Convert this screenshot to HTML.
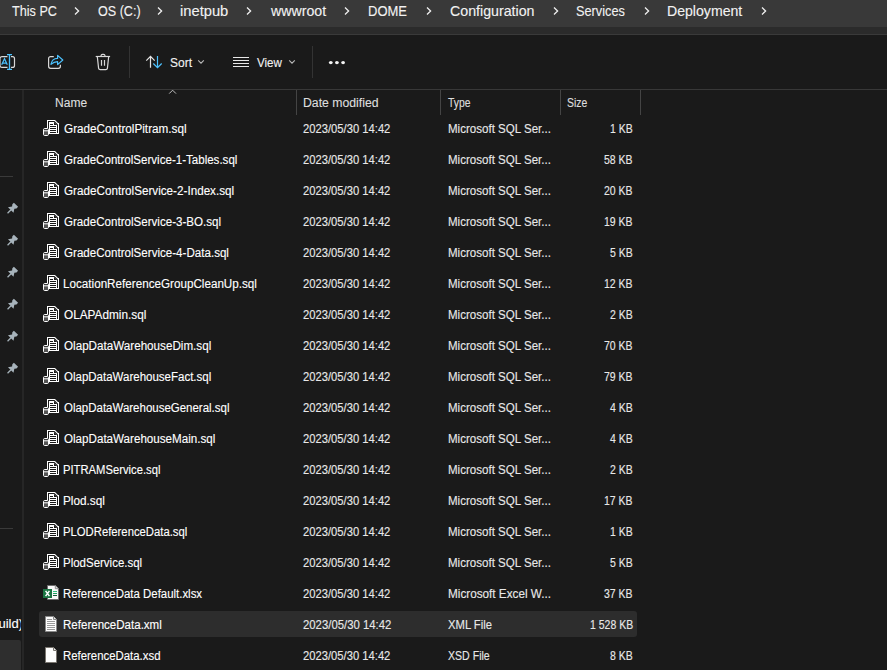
<!DOCTYPE html>
<html><head><meta charset="utf-8">
<style>
*{margin:0;padding:0;box-sizing:border-box}
html,body{width:887px;height:670px;overflow:hidden;background:#1a1a1a;font-family:"Liberation Sans",sans-serif;color:#fff}
.a,.ic,.t{position:absolute}
.t{white-space:nowrap;transform-origin:0 0;line-height:1;-webkit-text-stroke:0.12px currentColor}
.hsep{position:absolute;top:90px;width:1px;height:25px;background:#444}
</style></head><body>
<div class="a" style="left:0;top:0;width:887px;height:27px;background:#393939"></div>
<div class="a" style="left:0;top:27px;width:887px;height:7px;background:#2b2b2b"></div>
<div class="a" style="left:0;top:34px;width:887px;height:1px;background:#3a3a3a"></div>
<div class="a" style="left:0;top:89px;width:887px;height:1px;background:#383838"></div>
<div class="a" style="left:22px;top:90px;width:2px;height:580px;background:#262626"></div>

<svg class="a" width="8" height="10" viewBox="0 0 8 10" style="left:74.2px;top:6px"><path d="M1 1.5 L4.6 5 L1 8.5" fill="none" stroke="#f0f0f0" stroke-width="1.3"/></svg>
<svg class="a" width="8" height="10" viewBox="0 0 8 10" style="left:157.0px;top:6px"><path d="M1 1.5 L4.6 5 L1 8.5" fill="none" stroke="#f0f0f0" stroke-width="1.3"/></svg>
<svg class="a" width="8" height="10" viewBox="0 0 8 10" style="left:246.3px;top:6px"><path d="M1 1.5 L4.6 5 L1 8.5" fill="none" stroke="#f0f0f0" stroke-width="1.3"/></svg>
<svg class="a" width="8" height="10" viewBox="0 0 8 10" style="left:343.9px;top:6px"><path d="M1 1.5 L4.6 5 L1 8.5" fill="none" stroke="#f0f0f0" stroke-width="1.3"/></svg>
<svg class="a" width="8" height="10" viewBox="0 0 8 10" style="left:426.2px;top:6px"><path d="M1 1.5 L4.6 5 L1 8.5" fill="none" stroke="#f0f0f0" stroke-width="1.3"/></svg>
<svg class="a" width="8" height="10" viewBox="0 0 8 10" style="left:552.6px;top:6px"><path d="M1 1.5 L4.6 5 L1 8.5" fill="none" stroke="#f0f0f0" stroke-width="1.3"/></svg>
<svg class="a" width="8" height="10" viewBox="0 0 8 10" style="left:643.6px;top:6px"><path d="M1 1.5 L4.6 5 L1 8.5" fill="none" stroke="#f0f0f0" stroke-width="1.3"/></svg>
<svg class="a" width="8" height="10" viewBox="0 0 8 10" style="left:761.3px;top:6px"><path d="M1 1.5 L4.6 5 L1 8.5" fill="none" stroke="#f0f0f0" stroke-width="1.3"/></svg>
<svg class="a" width="18" height="20" viewBox="0 0 18 20" style="left:0px;top:52px">
<path d="M7.5 4.6 H2 A2 2 0 0 0 0 6.6 V13.4 A2 2 0 0 0 2 15.4 H7.5" fill="none" stroke="#d8d8d8" stroke-width="1.2"/>
<path d="M11 4.6 H12.5 A2 2 0 0 1 14.5 6.6 V13.4 A2 2 0 0 1 12.5 15.4 H11" fill="none" stroke="#d8d8d8" stroke-width="1.2"/>
<path d="M1.7 12.8 L4.5 6.7 L7.3 12.8 M2.7 11.2 H6.3" fill="none" stroke="#4cc2ff" stroke-width="1.2"/>
<path d="M9.5 2.6 V17.4 M7 2.6 H12 M7 17.4 H12" fill="none" stroke="#4cc2ff" stroke-width="1.3"/>
</svg>
<svg class="a" width="20" height="20" viewBox="0 0 20 20" style="left:45px;top:52px">
<path d="M8.8 4.6 H5.6 A2 2 0 0 0 3.6 6.6 V14.3 A2 2 0 0 0 5.6 16.3 H13.4 A2 2 0 0 0 15.4 14.3 V12.8" fill="none" stroke="#d8d8d8" stroke-width="1.2"/>
<path d="M6 12.4 C6.6 8.6 9.2 6.4 12.6 6.4 V3.4 L17.8 8 L12.6 12.6 V9.6 C9.6 9.6 7.6 10.8 6 12.4 Z" fill="none" stroke="#4cc2ff" stroke-width="1.2" stroke-linejoin="round"/>
</svg>
<svg class="a" width="20" height="20" viewBox="0 0 20 20" style="left:93px;top:52px">
<path d="M2.7 4.5 H17.1" stroke="#d8d8d8" stroke-width="1.2"/>
<path d="M8 4.5 V3.8 A1.5 1.5 0 0 1 9.5 2.4 H10.5 A1.5 1.5 0 0 1 12 3.8 V4.5" fill="none" stroke="#d8d8d8" stroke-width="1.2"/>
<path d="M4.3 4.5 L5.6 16.3 A1.6 1.6 0 0 0 7.2 17.6 H12.8 A1.6 1.6 0 0 0 14.4 16.3 L15.7 4.5" fill="none" stroke="#d8d8d8" stroke-width="1.2"/>
<path d="M8.5 8 V13.8 M11.5 8 V13.8" stroke="#d8d8d8" stroke-width="1.2"/>
</svg>
<div class="a" style="left:129px;top:46px;width:1px;height:32px;background:#333"></div>
<svg class="a" width="22" height="20" viewBox="0 0 22 20" style="left:143px;top:52px">
<path d="M7.5 15.8 V4.4 M3.3 8.6 L7.5 4.4 L11.7 8.6" fill="none" stroke="#e4e4e4" stroke-width="1.2"/>
<path d="M14.5 4 V15.6 M10.3 11.5 L14.5 15.7 L18.7 11.5" fill="none" stroke="#4cc2ff" stroke-width="1.2"/>
</svg>
<svg class="a" width="8" height="6" viewBox="0 0 8 6" style="left:197px;top:59px"><path d="M1.2 1.4 L4 4.2 L6.8 1.4" fill="none" stroke="#b8b8b8" stroke-width="1.1"/></svg>
<svg class="a" width="18" height="12" viewBox="0 0 18 12" style="left:232px;top:56px" shape-rendering="crispEdges">
<path d="M1 1h16v1h-16z M1 4h16v1h-16z M1 7h16v1h-16z M1 10h16v1h-16z" fill="#e8e8e8"/>
</svg>
<svg class="a" width="8" height="6" viewBox="0 0 8 6" style="left:288px;top:59px"><path d="M1.2 1.4 L4 4.2 L6.8 1.4" fill="none" stroke="#b8b8b8" stroke-width="1.1"/></svg>
<div class="a" style="left:312px;top:46px;width:1px;height:32px;background:#333"></div>
<svg class="a" width="20" height="6" viewBox="0 0 20 6" style="left:327px;top:60px">
<ellipse cx="3.8" cy="2.6" rx="1.9" ry="1.6" fill="#f4f4f4"/><ellipse cx="9.9" cy="2.6" rx="1.9" ry="1.6" fill="#f4f4f4"/><ellipse cx="16.1" cy="2.6" rx="1.9" ry="1.6" fill="#f4f4f4"/>
</svg>

<div class="a" style="left:0;top:176px;width:13px;height:1px;background:#3a3a3a"></div>
<div class="a" style="left:0;top:528px;width:13px;height:1px;background:#3a3a3a"></div>
<svg class="a" width="21" height="18" viewBox="0 0 21 18" style="left:0;top:200px"><g transform="translate(15.98 4.78) rotate(45)" fill="#a7b3bb"><path d="M-2.95 0 H2.95 V2.2 L1.6 3.9 L3.9 7.4 H-3.9 L-1.6 3.9 L-2.95 2.2 Z"/><path d="M-0.65 7 H0.65 V11.9 H-0.65 Z"/></g></svg>
<svg class="a" width="21" height="18" viewBox="0 0 21 18" style="left:0;top:232px"><g transform="translate(15.98 4.78) rotate(45)" fill="#a7b3bb"><path d="M-2.95 0 H2.95 V2.2 L1.6 3.9 L3.9 7.4 H-3.9 L-1.6 3.9 L-2.95 2.2 Z"/><path d="M-0.65 7 H0.65 V11.9 H-0.65 Z"/></g></svg>
<svg class="a" width="21" height="18" viewBox="0 0 21 18" style="left:0;top:264px"><g transform="translate(15.98 4.78) rotate(45)" fill="#a7b3bb"><path d="M-2.95 0 H2.95 V2.2 L1.6 3.9 L3.9 7.4 H-3.9 L-1.6 3.9 L-2.95 2.2 Z"/><path d="M-0.65 7 H0.65 V11.9 H-0.65 Z"/></g></svg>
<svg class="a" width="21" height="18" viewBox="0 0 21 18" style="left:0;top:296px"><g transform="translate(15.98 4.78) rotate(45)" fill="#a7b3bb"><path d="M-2.95 0 H2.95 V2.2 L1.6 3.9 L3.9 7.4 H-3.9 L-1.6 3.9 L-2.95 2.2 Z"/><path d="M-0.65 7 H0.65 V11.9 H-0.65 Z"/></g></svg>
<svg class="a" width="21" height="18" viewBox="0 0 21 18" style="left:0;top:328px"><g transform="translate(15.98 4.78) rotate(45)" fill="#a7b3bb"><path d="M-2.95 0 H2.95 V2.2 L1.6 3.9 L3.9 7.4 H-3.9 L-1.6 3.9 L-2.95 2.2 Z"/><path d="M-0.65 7 H0.65 V11.9 H-0.65 Z"/></g></svg>
<svg class="a" width="21" height="18" viewBox="0 0 21 18" style="left:0;top:360px"><g transform="translate(15.98 4.78) rotate(45)" fill="#a7b3bb"><path d="M-2.95 0 H2.95 V2.2 L1.6 3.9 L3.9 7.4 H-3.9 L-1.6 3.9 L-2.95 2.2 Z"/><path d="M-0.65 7 H0.65 V11.9 H-0.65 Z"/></g></svg>
<div class="a" style="left:0;top:0;width:21px;height:670px;overflow:hidden"><div class="a" style="right:-2px;top:617px;font-size:13px;line-height:13px;color:#fff;white-space:nowrap;-webkit-text-stroke:0.12px #fff">(build)</div><div class="a" style="left:-10px;top:640px;width:31px;height:40px;background:#2e2e2e;border-radius:2px"></div></div>
<svg class="a" width="10" height="6" viewBox="0 0 10 6" style="left:168px;top:89px"><path d="M1.2 4.6 L4.6 1.2 L8 4.6" fill="none" stroke="#c0c0c0" stroke-width="1"/></svg>
<div class="hsep" style="left:296px"></div>
<div class="hsep" style="left:440px"></div>
<div class="hsep" style="left:560px"></div>
<div class="hsep" style="left:640px"></div>
<svg class="ic" width="18" height="18" viewBox="0 0 18 18" style="left:42px;top:119px" shape-rendering="crispEdges">
<path d="M5 1H13V2H5Z M5 1H6V9H5Z M16 4H17V15H16Z M7 14H17V15H7Z" fill="#fff"/>
<path d="M12.6 1.4 L16.6 5.4" stroke="#fff" stroke-width="1.1" shape-rendering="auto"/>
<path d="M7 3H12V6H15V14H7Z" fill="#fff"/>
<path d="M12 3 L15 6" stroke="#444" stroke-width="1" shape-rendering="auto"/>
<path d="M8 5H11V6H8Z M8 7H14V8H8Z M8 9H14V10H8Z M8 11H14V12H8Z M8 13H14V14H8Z" fill="#1a1a1a"/>
<rect x="1.5" y="9.5" width="5" height="7" rx="1.3" fill="#1a1a1a" stroke="#fff" stroke-width="1" shape-rendering="auto"/>
<path d="M2 10H6V11H2Z" fill="#3a3a3a"/>
<path d="M2 11H6V12H2Z" fill="#c8c8c8"/>
<path d="M2 12H6V13H2Z" fill="#8a8a8a"/>
<path d="M2 13H6V16H2Z" fill="#555"/>
</svg>
<svg class="ic" width="18" height="18" viewBox="0 0 18 18" style="left:42px;top:150px" shape-rendering="crispEdges">
<path d="M5 1H13V2H5Z M5 1H6V9H5Z M16 4H17V15H16Z M7 14H17V15H7Z" fill="#fff"/>
<path d="M12.6 1.4 L16.6 5.4" stroke="#fff" stroke-width="1.1" shape-rendering="auto"/>
<path d="M7 3H12V6H15V14H7Z" fill="#fff"/>
<path d="M12 3 L15 6" stroke="#444" stroke-width="1" shape-rendering="auto"/>
<path d="M8 5H11V6H8Z M8 7H14V8H8Z M8 9H14V10H8Z M8 11H14V12H8Z M8 13H14V14H8Z" fill="#1a1a1a"/>
<rect x="1.5" y="9.5" width="5" height="7" rx="1.3" fill="#1a1a1a" stroke="#fff" stroke-width="1" shape-rendering="auto"/>
<path d="M2 10H6V11H2Z" fill="#3a3a3a"/>
<path d="M2 11H6V12H2Z" fill="#c8c8c8"/>
<path d="M2 12H6V13H2Z" fill="#8a8a8a"/>
<path d="M2 13H6V16H2Z" fill="#555"/>
</svg>
<svg class="ic" width="18" height="18" viewBox="0 0 18 18" style="left:42px;top:181px" shape-rendering="crispEdges">
<path d="M5 1H13V2H5Z M5 1H6V9H5Z M16 4H17V15H16Z M7 14H17V15H7Z" fill="#fff"/>
<path d="M12.6 1.4 L16.6 5.4" stroke="#fff" stroke-width="1.1" shape-rendering="auto"/>
<path d="M7 3H12V6H15V14H7Z" fill="#fff"/>
<path d="M12 3 L15 6" stroke="#444" stroke-width="1" shape-rendering="auto"/>
<path d="M8 5H11V6H8Z M8 7H14V8H8Z M8 9H14V10H8Z M8 11H14V12H8Z M8 13H14V14H8Z" fill="#1a1a1a"/>
<rect x="1.5" y="9.5" width="5" height="7" rx="1.3" fill="#1a1a1a" stroke="#fff" stroke-width="1" shape-rendering="auto"/>
<path d="M2 10H6V11H2Z" fill="#3a3a3a"/>
<path d="M2 11H6V12H2Z" fill="#c8c8c8"/>
<path d="M2 12H6V13H2Z" fill="#8a8a8a"/>
<path d="M2 13H6V16H2Z" fill="#555"/>
</svg>
<svg class="ic" width="18" height="18" viewBox="0 0 18 18" style="left:42px;top:212px" shape-rendering="crispEdges">
<path d="M5 1H13V2H5Z M5 1H6V9H5Z M16 4H17V15H16Z M7 14H17V15H7Z" fill="#fff"/>
<path d="M12.6 1.4 L16.6 5.4" stroke="#fff" stroke-width="1.1" shape-rendering="auto"/>
<path d="M7 3H12V6H15V14H7Z" fill="#fff"/>
<path d="M12 3 L15 6" stroke="#444" stroke-width="1" shape-rendering="auto"/>
<path d="M8 5H11V6H8Z M8 7H14V8H8Z M8 9H14V10H8Z M8 11H14V12H8Z M8 13H14V14H8Z" fill="#1a1a1a"/>
<rect x="1.5" y="9.5" width="5" height="7" rx="1.3" fill="#1a1a1a" stroke="#fff" stroke-width="1" shape-rendering="auto"/>
<path d="M2 10H6V11H2Z" fill="#3a3a3a"/>
<path d="M2 11H6V12H2Z" fill="#c8c8c8"/>
<path d="M2 12H6V13H2Z" fill="#8a8a8a"/>
<path d="M2 13H6V16H2Z" fill="#555"/>
</svg>
<svg class="ic" width="18" height="18" viewBox="0 0 18 18" style="left:42px;top:243px" shape-rendering="crispEdges">
<path d="M5 1H13V2H5Z M5 1H6V9H5Z M16 4H17V15H16Z M7 14H17V15H7Z" fill="#fff"/>
<path d="M12.6 1.4 L16.6 5.4" stroke="#fff" stroke-width="1.1" shape-rendering="auto"/>
<path d="M7 3H12V6H15V14H7Z" fill="#fff"/>
<path d="M12 3 L15 6" stroke="#444" stroke-width="1" shape-rendering="auto"/>
<path d="M8 5H11V6H8Z M8 7H14V8H8Z M8 9H14V10H8Z M8 11H14V12H8Z M8 13H14V14H8Z" fill="#1a1a1a"/>
<rect x="1.5" y="9.5" width="5" height="7" rx="1.3" fill="#1a1a1a" stroke="#fff" stroke-width="1" shape-rendering="auto"/>
<path d="M2 10H6V11H2Z" fill="#3a3a3a"/>
<path d="M2 11H6V12H2Z" fill="#c8c8c8"/>
<path d="M2 12H6V13H2Z" fill="#8a8a8a"/>
<path d="M2 13H6V16H2Z" fill="#555"/>
</svg>
<svg class="ic" width="18" height="18" viewBox="0 0 18 18" style="left:42px;top:274px" shape-rendering="crispEdges">
<path d="M5 1H13V2H5Z M5 1H6V9H5Z M16 4H17V15H16Z M7 14H17V15H7Z" fill="#fff"/>
<path d="M12.6 1.4 L16.6 5.4" stroke="#fff" stroke-width="1.1" shape-rendering="auto"/>
<path d="M7 3H12V6H15V14H7Z" fill="#fff"/>
<path d="M12 3 L15 6" stroke="#444" stroke-width="1" shape-rendering="auto"/>
<path d="M8 5H11V6H8Z M8 7H14V8H8Z M8 9H14V10H8Z M8 11H14V12H8Z M8 13H14V14H8Z" fill="#1a1a1a"/>
<rect x="1.5" y="9.5" width="5" height="7" rx="1.3" fill="#1a1a1a" stroke="#fff" stroke-width="1" shape-rendering="auto"/>
<path d="M2 10H6V11H2Z" fill="#3a3a3a"/>
<path d="M2 11H6V12H2Z" fill="#c8c8c8"/>
<path d="M2 12H6V13H2Z" fill="#8a8a8a"/>
<path d="M2 13H6V16H2Z" fill="#555"/>
</svg>
<svg class="ic" width="18" height="18" viewBox="0 0 18 18" style="left:42px;top:305px" shape-rendering="crispEdges">
<path d="M5 1H13V2H5Z M5 1H6V9H5Z M16 4H17V15H16Z M7 14H17V15H7Z" fill="#fff"/>
<path d="M12.6 1.4 L16.6 5.4" stroke="#fff" stroke-width="1.1" shape-rendering="auto"/>
<path d="M7 3H12V6H15V14H7Z" fill="#fff"/>
<path d="M12 3 L15 6" stroke="#444" stroke-width="1" shape-rendering="auto"/>
<path d="M8 5H11V6H8Z M8 7H14V8H8Z M8 9H14V10H8Z M8 11H14V12H8Z M8 13H14V14H8Z" fill="#1a1a1a"/>
<rect x="1.5" y="9.5" width="5" height="7" rx="1.3" fill="#1a1a1a" stroke="#fff" stroke-width="1" shape-rendering="auto"/>
<path d="M2 10H6V11H2Z" fill="#3a3a3a"/>
<path d="M2 11H6V12H2Z" fill="#c8c8c8"/>
<path d="M2 12H6V13H2Z" fill="#8a8a8a"/>
<path d="M2 13H6V16H2Z" fill="#555"/>
</svg>
<svg class="ic" width="18" height="18" viewBox="0 0 18 18" style="left:42px;top:336px" shape-rendering="crispEdges">
<path d="M5 1H13V2H5Z M5 1H6V9H5Z M16 4H17V15H16Z M7 14H17V15H7Z" fill="#fff"/>
<path d="M12.6 1.4 L16.6 5.4" stroke="#fff" stroke-width="1.1" shape-rendering="auto"/>
<path d="M7 3H12V6H15V14H7Z" fill="#fff"/>
<path d="M12 3 L15 6" stroke="#444" stroke-width="1" shape-rendering="auto"/>
<path d="M8 5H11V6H8Z M8 7H14V8H8Z M8 9H14V10H8Z M8 11H14V12H8Z M8 13H14V14H8Z" fill="#1a1a1a"/>
<rect x="1.5" y="9.5" width="5" height="7" rx="1.3" fill="#1a1a1a" stroke="#fff" stroke-width="1" shape-rendering="auto"/>
<path d="M2 10H6V11H2Z" fill="#3a3a3a"/>
<path d="M2 11H6V12H2Z" fill="#c8c8c8"/>
<path d="M2 12H6V13H2Z" fill="#8a8a8a"/>
<path d="M2 13H6V16H2Z" fill="#555"/>
</svg>
<svg class="ic" width="18" height="18" viewBox="0 0 18 18" style="left:42px;top:367px" shape-rendering="crispEdges">
<path d="M5 1H13V2H5Z M5 1H6V9H5Z M16 4H17V15H16Z M7 14H17V15H7Z" fill="#fff"/>
<path d="M12.6 1.4 L16.6 5.4" stroke="#fff" stroke-width="1.1" shape-rendering="auto"/>
<path d="M7 3H12V6H15V14H7Z" fill="#fff"/>
<path d="M12 3 L15 6" stroke="#444" stroke-width="1" shape-rendering="auto"/>
<path d="M8 5H11V6H8Z M8 7H14V8H8Z M8 9H14V10H8Z M8 11H14V12H8Z M8 13H14V14H8Z" fill="#1a1a1a"/>
<rect x="1.5" y="9.5" width="5" height="7" rx="1.3" fill="#1a1a1a" stroke="#fff" stroke-width="1" shape-rendering="auto"/>
<path d="M2 10H6V11H2Z" fill="#3a3a3a"/>
<path d="M2 11H6V12H2Z" fill="#c8c8c8"/>
<path d="M2 12H6V13H2Z" fill="#8a8a8a"/>
<path d="M2 13H6V16H2Z" fill="#555"/>
</svg>
<svg class="ic" width="18" height="18" viewBox="0 0 18 18" style="left:42px;top:398px" shape-rendering="crispEdges">
<path d="M5 1H13V2H5Z M5 1H6V9H5Z M16 4H17V15H16Z M7 14H17V15H7Z" fill="#fff"/>
<path d="M12.6 1.4 L16.6 5.4" stroke="#fff" stroke-width="1.1" shape-rendering="auto"/>
<path d="M7 3H12V6H15V14H7Z" fill="#fff"/>
<path d="M12 3 L15 6" stroke="#444" stroke-width="1" shape-rendering="auto"/>
<path d="M8 5H11V6H8Z M8 7H14V8H8Z M8 9H14V10H8Z M8 11H14V12H8Z M8 13H14V14H8Z" fill="#1a1a1a"/>
<rect x="1.5" y="9.5" width="5" height="7" rx="1.3" fill="#1a1a1a" stroke="#fff" stroke-width="1" shape-rendering="auto"/>
<path d="M2 10H6V11H2Z" fill="#3a3a3a"/>
<path d="M2 11H6V12H2Z" fill="#c8c8c8"/>
<path d="M2 12H6V13H2Z" fill="#8a8a8a"/>
<path d="M2 13H6V16H2Z" fill="#555"/>
</svg>
<svg class="ic" width="18" height="18" viewBox="0 0 18 18" style="left:42px;top:429px" shape-rendering="crispEdges">
<path d="M5 1H13V2H5Z M5 1H6V9H5Z M16 4H17V15H16Z M7 14H17V15H7Z" fill="#fff"/>
<path d="M12.6 1.4 L16.6 5.4" stroke="#fff" stroke-width="1.1" shape-rendering="auto"/>
<path d="M7 3H12V6H15V14H7Z" fill="#fff"/>
<path d="M12 3 L15 6" stroke="#444" stroke-width="1" shape-rendering="auto"/>
<path d="M8 5H11V6H8Z M8 7H14V8H8Z M8 9H14V10H8Z M8 11H14V12H8Z M8 13H14V14H8Z" fill="#1a1a1a"/>
<rect x="1.5" y="9.5" width="5" height="7" rx="1.3" fill="#1a1a1a" stroke="#fff" stroke-width="1" shape-rendering="auto"/>
<path d="M2 10H6V11H2Z" fill="#3a3a3a"/>
<path d="M2 11H6V12H2Z" fill="#c8c8c8"/>
<path d="M2 12H6V13H2Z" fill="#8a8a8a"/>
<path d="M2 13H6V16H2Z" fill="#555"/>
</svg>
<svg class="ic" width="18" height="18" viewBox="0 0 18 18" style="left:42px;top:460px" shape-rendering="crispEdges">
<path d="M5 1H13V2H5Z M5 1H6V9H5Z M16 4H17V15H16Z M7 14H17V15H7Z" fill="#fff"/>
<path d="M12.6 1.4 L16.6 5.4" stroke="#fff" stroke-width="1.1" shape-rendering="auto"/>
<path d="M7 3H12V6H15V14H7Z" fill="#fff"/>
<path d="M12 3 L15 6" stroke="#444" stroke-width="1" shape-rendering="auto"/>
<path d="M8 5H11V6H8Z M8 7H14V8H8Z M8 9H14V10H8Z M8 11H14V12H8Z M8 13H14V14H8Z" fill="#1a1a1a"/>
<rect x="1.5" y="9.5" width="5" height="7" rx="1.3" fill="#1a1a1a" stroke="#fff" stroke-width="1" shape-rendering="auto"/>
<path d="M2 10H6V11H2Z" fill="#3a3a3a"/>
<path d="M2 11H6V12H2Z" fill="#c8c8c8"/>
<path d="M2 12H6V13H2Z" fill="#8a8a8a"/>
<path d="M2 13H6V16H2Z" fill="#555"/>
</svg>
<svg class="ic" width="18" height="18" viewBox="0 0 18 18" style="left:42px;top:491px" shape-rendering="crispEdges">
<path d="M5 1H13V2H5Z M5 1H6V9H5Z M16 4H17V15H16Z M7 14H17V15H7Z" fill="#fff"/>
<path d="M12.6 1.4 L16.6 5.4" stroke="#fff" stroke-width="1.1" shape-rendering="auto"/>
<path d="M7 3H12V6H15V14H7Z" fill="#fff"/>
<path d="M12 3 L15 6" stroke="#444" stroke-width="1" shape-rendering="auto"/>
<path d="M8 5H11V6H8Z M8 7H14V8H8Z M8 9H14V10H8Z M8 11H14V12H8Z M8 13H14V14H8Z" fill="#1a1a1a"/>
<rect x="1.5" y="9.5" width="5" height="7" rx="1.3" fill="#1a1a1a" stroke="#fff" stroke-width="1" shape-rendering="auto"/>
<path d="M2 10H6V11H2Z" fill="#3a3a3a"/>
<path d="M2 11H6V12H2Z" fill="#c8c8c8"/>
<path d="M2 12H6V13H2Z" fill="#8a8a8a"/>
<path d="M2 13H6V16H2Z" fill="#555"/>
</svg>
<svg class="ic" width="18" height="18" viewBox="0 0 18 18" style="left:42px;top:522px" shape-rendering="crispEdges">
<path d="M5 1H13V2H5Z M5 1H6V9H5Z M16 4H17V15H16Z M7 14H17V15H7Z" fill="#fff"/>
<path d="M12.6 1.4 L16.6 5.4" stroke="#fff" stroke-width="1.1" shape-rendering="auto"/>
<path d="M7 3H12V6H15V14H7Z" fill="#fff"/>
<path d="M12 3 L15 6" stroke="#444" stroke-width="1" shape-rendering="auto"/>
<path d="M8 5H11V6H8Z M8 7H14V8H8Z M8 9H14V10H8Z M8 11H14V12H8Z M8 13H14V14H8Z" fill="#1a1a1a"/>
<rect x="1.5" y="9.5" width="5" height="7" rx="1.3" fill="#1a1a1a" stroke="#fff" stroke-width="1" shape-rendering="auto"/>
<path d="M2 10H6V11H2Z" fill="#3a3a3a"/>
<path d="M2 11H6V12H2Z" fill="#c8c8c8"/>
<path d="M2 12H6V13H2Z" fill="#8a8a8a"/>
<path d="M2 13H6V16H2Z" fill="#555"/>
</svg>
<svg class="ic" width="18" height="18" viewBox="0 0 18 18" style="left:42px;top:553px" shape-rendering="crispEdges">
<path d="M5 1H13V2H5Z M5 1H6V9H5Z M16 4H17V15H16Z M7 14H17V15H7Z" fill="#fff"/>
<path d="M12.6 1.4 L16.6 5.4" stroke="#fff" stroke-width="1.1" shape-rendering="auto"/>
<path d="M7 3H12V6H15V14H7Z" fill="#fff"/>
<path d="M12 3 L15 6" stroke="#444" stroke-width="1" shape-rendering="auto"/>
<path d="M8 5H11V6H8Z M8 7H14V8H8Z M8 9H14V10H8Z M8 11H14V12H8Z M8 13H14V14H8Z" fill="#1a1a1a"/>
<rect x="1.5" y="9.5" width="5" height="7" rx="1.3" fill="#1a1a1a" stroke="#fff" stroke-width="1" shape-rendering="auto"/>
<path d="M2 10H6V11H2Z" fill="#3a3a3a"/>
<path d="M2 11H6V12H2Z" fill="#c8c8c8"/>
<path d="M2 12H6V13H2Z" fill="#8a8a8a"/>
<path d="M2 13H6V16H2Z" fill="#555"/>
</svg>
<svg class="ic" width="18" height="18" viewBox="0 0 18 18" style="left:42px;top:584px" shape-rendering="crispEdges">
<path d="M5.5 1.5 H13.3 L16.5 4.7 V15.5 H5.5 Z" fill="#fafafa" stroke="#6e6e6e" stroke-width="1" shape-rendering="auto"/>
<path d="M13.3 1.5 V4.7 H16.5" fill="#ddd" stroke="#888" stroke-width="0.9" shape-rendering="auto"/>
<path d="M11 7H15V8H11Z" fill="#33c481"/>
<path d="M11 9H15V10H11Z" fill="#21a366"/>
<path d="M11 11H15V12H11Z" fill="#185c37"/>
<rect x="1" y="5" width="9" height="9" fill="#1d7544"/>
<path d="M3.6 6.9 L7.4 12.1 M7.4 6.9 L3.6 12.1" stroke="#fff" stroke-width="1.5" shape-rendering="auto"/>
</svg>
<div class="a" style="left:39px;top:611px;width:598px;height:26px;background:#2d2d2d;border-radius:3px"></div>
<svg class="ic" width="18" height="18" viewBox="0 0 18 18" style="left:42px;top:615px" shape-rendering="crispEdges">
<path d="M3.5 1.5 H11.5 L14.5 4.5 V16.5 H3.5 Z" fill="#fdfdfd" stroke="#8a8a8a" stroke-width="1" shape-rendering="auto"/>
<path d="M11.5 1.5 V4.5 H14.5" fill="#e8e8e8" stroke="#8a8a8a" stroke-width="1" shape-rendering="auto"/>
<path d="M5 4H10V5H5Z M5 6H13V7H5Z M5 8H13V9H5Z M5 10H13V11H5Z M5 12H13V13H5Z M5 14H13V15H5Z" fill="#9a9a9a"/>
</svg>
<svg class="ic" width="18" height="18" viewBox="0 0 18 18" style="left:42px;top:646px">
<path d="M3.5 1.5 H11.5 L14.5 4.5 V16.5 H3.5 Z" fill="#fdfdfd" stroke="#7a7670" stroke-width="1"/>
<path d="M11.5 1.5 V4.5 H14.5" fill="#e8e8e8" stroke="#7a7670" stroke-width="1"/>
</svg>
<div class="t" id="c0" style="top:2.5px;font-size:15px;color:#f2f2f2;left:12.00px;transform:scaleX(0.8434);">This PC</div>
<div class="t" id="c1" style="top:2.5px;font-size:15px;color:#f2f2f2;left:97.81px;transform:scaleX(0.8380);">OS (C:)</div>
<div class="t" id="c2" style="top:2.5px;font-size:15px;color:#f2f2f2;left:180.40px;transform:scaleX(0.9813);">inetpub</div>
<div class="t" id="c3" style="top:2.5px;font-size:15px;color:#f2f2f2;left:270.58px;transform:scaleX(0.9441);">wwwroot</div>
<div class="t" id="c4" style="top:2.5px;font-size:15px;color:#f2f2f2;left:368.07px;transform:scaleX(0.8667);">DOME</div>
<div class="t" id="c5" style="top:2.5px;font-size:15px;color:#f2f2f2;left:450.00px;transform:scaleX(0.9472);">Configuration</div>
<div class="t" id="c6" style="top:2.5px;font-size:15px;color:#f2f2f2;left:576.08px;transform:scaleX(0.8491);">Services</div>
<div class="t" id="c7" style="top:2.5px;font-size:15px;color:#f2f2f2;left:666.64px;transform:scaleX(0.9400);">Deployment</div>
<div class="t" id="sort" style="top:56px;font-size:13px;color:#f2f2f2;left:169.61px;transform:scaleX(0.9208);">Sort</div>
<div class="t" id="view" style="top:56px;font-size:13px;color:#f2f2f2;left:256.95px;transform:scaleX(0.8931);">View</div>
<div class="t" id="h0" style="top:97px;font-size:12px;color:#dedede;left:54.59px;transform:scaleX(1.0031);">Name</div>
<div class="t" id="h1" style="top:97px;font-size:12px;color:#dedede;left:302.58px;transform:scaleX(1.0205);">Date modified</div>
<div class="t" id="h2" style="top:97px;font-size:12px;color:#dedede;left:448.11px;transform:scaleX(0.8667);">Type</div>
<div class="t" id="h3" style="top:97px;font-size:12px;color:#dedede;left:566.80px;transform:scaleX(0.8696);">Size</div>
<div class="t" id="n0" style="top:123px;font-size:12px;color:#ffffff;left:63.78px;transform:scaleX(0.9778);">GradeControlPitram.sql</div>
<div class="t" id="d0" style="top:123px;font-size:12px;color:#e8e8e8;left:303.19px;transform:scaleX(0.9351);">2023/05/30 14:42</div>
<div class="t" id="t0" style="top:123px;font-size:12px;color:#e8e8e8;left:447.60px;transform:scaleX(0.9623);">Microsoft SQL Ser...</div>
<div class="t" id="s0" style="top:123px;font-size:12px;color:#e8e8e8;left:609.91px;transform:scaleX(0.8735);">1 KB</div>
<div class="t" id="n1" style="top:154px;font-size:12px;color:#ffffff;left:63.78px;transform:scaleX(0.9628);">GradeControlService-1-Tables.sql</div>
<div class="t" id="d1" style="top:154px;font-size:12px;color:#e8e8e8;left:303.19px;transform:scaleX(0.9351);">2023/05/30 14:42</div>
<div class="t" id="t1" style="top:154px;font-size:12px;color:#e8e8e8;left:447.60px;transform:scaleX(0.9623);">Microsoft SQL Ser...</div>
<div class="t" id="s1" style="top:154px;font-size:12px;color:#e8e8e8;left:604.07px;transform:scaleX(0.8735);">58 KB</div>
<div class="t" id="n2" style="top:185px;font-size:12px;color:#ffffff;left:63.78px;transform:scaleX(0.9737);">GradeControlService-2-Index.sql</div>
<div class="t" id="d2" style="top:185px;font-size:12px;color:#e8e8e8;left:303.19px;transform:scaleX(0.9351);">2023/05/30 14:42</div>
<div class="t" id="t2" style="top:185px;font-size:12px;color:#e8e8e8;left:447.60px;transform:scaleX(0.9623);">Microsoft SQL Ser...</div>
<div class="t" id="s2" style="top:185px;font-size:12px;color:#e8e8e8;left:604.07px;transform:scaleX(0.8735);">20 KB</div>
<div class="t" id="n3" style="top:216px;font-size:12px;color:#ffffff;left:63.78px;transform:scaleX(0.9650);">GradeControlService-3-BO.sql</div>
<div class="t" id="d3" style="top:216px;font-size:12px;color:#e8e8e8;left:303.19px;transform:scaleX(0.9351);">2023/05/30 14:42</div>
<div class="t" id="t3" style="top:216px;font-size:12px;color:#e8e8e8;left:447.60px;transform:scaleX(0.9623);">Microsoft SQL Ser...</div>
<div class="t" id="s3" style="top:216px;font-size:12px;color:#e8e8e8;left:604.07px;transform:scaleX(0.8735);">19 KB</div>
<div class="t" id="n4" style="top:247px;font-size:12px;color:#ffffff;left:63.78px;transform:scaleX(0.9661);">GradeControlService-4-Data.sql</div>
<div class="t" id="d4" style="top:247px;font-size:12px;color:#e8e8e8;left:303.19px;transform:scaleX(0.9351);">2023/05/30 14:42</div>
<div class="t" id="t4" style="top:247px;font-size:12px;color:#e8e8e8;left:447.60px;transform:scaleX(0.9623);">Microsoft SQL Ser...</div>
<div class="t" id="s4" style="top:247px;font-size:12px;color:#e8e8e8;left:609.91px;transform:scaleX(0.8735);">5 KB</div>
<div class="t" id="n5" style="top:278px;font-size:12px;color:#ffffff;left:62.81px;transform:scaleX(0.9724);">LocationReferenceGroupCleanUp.sql</div>
<div class="t" id="d5" style="top:278px;font-size:12px;color:#e8e8e8;left:303.19px;transform:scaleX(0.9351);">2023/05/30 14:42</div>
<div class="t" id="t5" style="top:278px;font-size:12px;color:#e8e8e8;left:447.60px;transform:scaleX(0.9623);">Microsoft SQL Ser...</div>
<div class="t" id="s5" style="top:278px;font-size:12px;color:#e8e8e8;left:604.07px;transform:scaleX(0.8735);">12 KB</div>
<div class="t" id="n6" style="top:309px;font-size:12px;color:#ffffff;left:63.78px;transform:scaleX(0.9833);">OLAPAdmin.sql</div>
<div class="t" id="d6" style="top:309px;font-size:12px;color:#e8e8e8;left:303.19px;transform:scaleX(0.9351);">2023/05/30 14:42</div>
<div class="t" id="t6" style="top:309px;font-size:12px;color:#e8e8e8;left:447.60px;transform:scaleX(0.9623);">Microsoft SQL Ser...</div>
<div class="t" id="s6" style="top:309px;font-size:12px;color:#e8e8e8;left:609.91px;transform:scaleX(0.8735);">2 KB</div>
<div class="t" id="n7" style="top:340px;font-size:12px;color:#ffffff;left:63.78px;transform:scaleX(0.9711);">OlapDataWarehouseDim.sql</div>
<div class="t" id="d7" style="top:340px;font-size:12px;color:#e8e8e8;left:303.19px;transform:scaleX(0.9351);">2023/05/30 14:42</div>
<div class="t" id="t7" style="top:340px;font-size:12px;color:#e8e8e8;left:447.60px;transform:scaleX(0.9623);">Microsoft SQL Ser...</div>
<div class="t" id="s7" style="top:340px;font-size:12px;color:#e8e8e8;left:604.07px;transform:scaleX(0.8735);">70 KB</div>
<div class="t" id="n8" style="top:371px;font-size:12px;color:#ffffff;left:63.77px;transform:scaleX(0.9584);">OlapDataWarehouseFact.sql</div>
<div class="t" id="d8" style="top:371px;font-size:12px;color:#e8e8e8;left:303.19px;transform:scaleX(0.9351);">2023/05/30 14:42</div>
<div class="t" id="t8" style="top:371px;font-size:12px;color:#e8e8e8;left:447.60px;transform:scaleX(0.9623);">Microsoft SQL Ser...</div>
<div class="t" id="s8" style="top:371px;font-size:12px;color:#e8e8e8;left:604.07px;transform:scaleX(0.8735);">79 KB</div>
<div class="t" id="n9" style="top:402px;font-size:12px;color:#ffffff;left:63.77px;transform:scaleX(0.9566);">OlapDataWarehouseGeneral.sql</div>
<div class="t" id="d9" style="top:402px;font-size:12px;color:#e8e8e8;left:303.19px;transform:scaleX(0.9351);">2023/05/30 14:42</div>
<div class="t" id="t9" style="top:402px;font-size:12px;color:#e8e8e8;left:447.60px;transform:scaleX(0.9623);">Microsoft SQL Ser...</div>
<div class="t" id="s9" style="top:402px;font-size:12px;color:#e8e8e8;left:609.91px;transform:scaleX(0.8735);">4 KB</div>
<div class="t" id="n10" style="top:433px;font-size:12px;color:#ffffff;left:63.78px;transform:scaleX(0.9682);">OlapDataWarehouseMain.sql</div>
<div class="t" id="d10" style="top:433px;font-size:12px;color:#e8e8e8;left:303.19px;transform:scaleX(0.9351);">2023/05/30 14:42</div>
<div class="t" id="t10" style="top:433px;font-size:12px;color:#e8e8e8;left:447.60px;transform:scaleX(0.9623);">Microsoft SQL Ser...</div>
<div class="t" id="s10" style="top:433px;font-size:12px;color:#e8e8e8;left:609.91px;transform:scaleX(0.8735);">4 KB</div>
<div class="t" id="n11" style="top:464px;font-size:12px;color:#ffffff;left:62.83px;transform:scaleX(0.9369);">PITRAMService.sql</div>
<div class="t" id="d11" style="top:464px;font-size:12px;color:#e8e8e8;left:303.19px;transform:scaleX(0.9351);">2023/05/30 14:42</div>
<div class="t" id="t11" style="top:464px;font-size:12px;color:#e8e8e8;left:447.60px;transform:scaleX(0.9623);">Microsoft SQL Ser...</div>
<div class="t" id="s11" style="top:464px;font-size:12px;color:#e8e8e8;left:609.91px;transform:scaleX(0.8735);">2 KB</div>
<div class="t" id="n12" style="top:495px;font-size:12px;color:#ffffff;left:62.80px;transform:scaleX(0.9810);">Plod.sql</div>
<div class="t" id="d12" style="top:495px;font-size:12px;color:#e8e8e8;left:303.19px;transform:scaleX(0.9351);">2023/05/30 14:42</div>
<div class="t" id="t12" style="top:495px;font-size:12px;color:#e8e8e8;left:447.60px;transform:scaleX(0.9623);">Microsoft SQL Ser...</div>
<div class="t" id="s12" style="top:495px;font-size:12px;color:#e8e8e8;left:604.07px;transform:scaleX(0.8735);">17 KB</div>
<div class="t" id="n13" style="top:526px;font-size:12px;color:#ffffff;left:62.83px;transform:scaleX(0.9412);">PLODReferenceData.sql</div>
<div class="t" id="d13" style="top:526px;font-size:12px;color:#e8e8e8;left:303.19px;transform:scaleX(0.9351);">2023/05/30 14:42</div>
<div class="t" id="t13" style="top:526px;font-size:12px;color:#e8e8e8;left:447.60px;transform:scaleX(0.9623);">Microsoft SQL Ser...</div>
<div class="t" id="s13" style="top:526px;font-size:12px;color:#e8e8e8;left:609.91px;transform:scaleX(0.8735);">1 KB</div>
<div class="t" id="n14" style="top:557px;font-size:12px;color:#ffffff;left:62.82px;transform:scaleX(0.9573);">PlodService.sql</div>
<div class="t" id="d14" style="top:557px;font-size:12px;color:#e8e8e8;left:303.19px;transform:scaleX(0.9351);">2023/05/30 14:42</div>
<div class="t" id="t14" style="top:557px;font-size:12px;color:#e8e8e8;left:447.60px;transform:scaleX(0.9623);">Microsoft SQL Ser...</div>
<div class="t" id="s14" style="top:557px;font-size:12px;color:#e8e8e8;left:609.91px;transform:scaleX(0.8735);">5 KB</div>
<div class="t" id="n15" style="top:588px;font-size:12px;color:#ffffff;left:62.82px;transform:scaleX(0.9521);">ReferenceData Default.xlsx</div>
<div class="t" id="d15" style="top:588px;font-size:12px;color:#e8e8e8;left:303.19px;transform:scaleX(0.9351);">2023/05/30 14:42</div>
<div class="t" id="t15" style="top:588px;font-size:12px;color:#e8e8e8;left:447.60px;transform:scaleX(0.9781);">Microsoft Excel W...</div>
<div class="t" id="s15" style="top:588px;font-size:12px;color:#e8e8e8;left:604.07px;transform:scaleX(0.8735);">37 KB</div>
<div class="t" id="n16" style="top:619px;font-size:12px;color:#ffffff;left:62.81px;transform:scaleX(0.9618);">ReferenceData.xml</div>
<div class="t" id="d16" style="top:619px;font-size:12px;color:#e8e8e8;left:303.19px;transform:scaleX(0.9452);">2023/05/30 14:42</div>
<div class="t" id="t16" style="top:619px;font-size:12px;color:#e8e8e8;left:447.61px;transform:scaleX(0.9383);">XML File</div>
<div class="t" id="s16" style="top:619px;font-size:12px;color:#e8e8e8;left:589.51px;transform:scaleX(0.8735);">1 528 KB</div>
<div class="t" id="n17" style="top:650px;font-size:12px;color:#ffffff;left:62.82px;transform:scaleX(0.9490);">ReferenceData.xsd</div>
<div class="t" id="d17" style="top:650px;font-size:12px;color:#e8e8e8;left:303.19px;transform:scaleX(0.9351);">2023/05/30 14:42</div>
<div class="t" id="t17" style="top:650px;font-size:12px;color:#e8e8e8;left:447.62px;transform:scaleX(0.8809);">XSD File</div>
<div class="t" id="s17" style="top:650px;font-size:12px;color:#e8e8e8;left:609.91px;transform:scaleX(0.8735);">8 KB</div>
</body></html>
